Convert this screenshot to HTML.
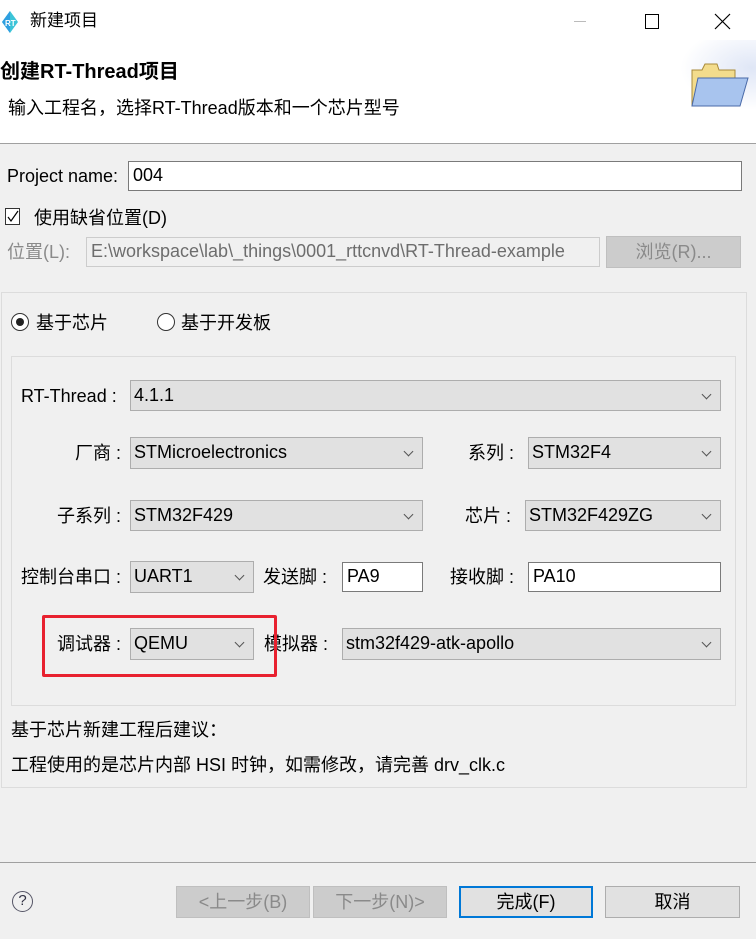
<!DOCTYPE html>
<html><head><meta charset="utf-8"><style>
*{margin:0;padding:0;box-sizing:border-box}
body{width:756px;height:939px;background:#f0f0f0;position:relative;overflow:hidden;font-family:"Liberation Sans","Noto Sans CJK SC",sans-serif;font-size:18px;color:#000}
.a{position:absolute;white-space:nowrap}
.cb{position:absolute;background:#e1e1e1;border:1px solid #adadad;padding-left:3px;line-height:29px}
.cb:after{content:"";position:absolute;right:10px;top:10px;width:6px;height:6px;border-right:1px solid #555;border-bottom:1px solid #555;transform:rotate(45deg)}
.in{position:absolute;background:#fff;border:1px solid #7a7a7a;padding-left:4px;line-height:27px}
.lb{position:absolute;white-space:nowrap;line-height:20px}
.btn{position:absolute;border:1px solid #adadad;background:#e1e1e1;text-align:center;line-height:30px;height:32px;width:134px}
</style></head><body>
<div class="a" style="left:0;top:0;width:756px;height:144px;background:#fff;border-bottom:1px solid #a0a0a0"></div>
<svg class="a" style="left:2px;top:11px" width="16" height="22" viewBox="0 0 16 22"><polygon points="0,11 8,0 16,11 8,22" fill="#3cc4d8"/><polygon points="0,11 8,0 8,22" fill="#2e9fe0"/><text x="3" y="15" font-size="8" fill="#fff" font-family="Liberation Sans" font-weight="bold">RT</text></svg>
<div class="a" style="left:30px;top:10px;font-size:17px;line-height:22px">新建项目</div>
<div class="a" style="left:574px;top:21px;width:12px;height:1px;background:#bbb"></div>
<div class="a" style="left:645px;top:14px;width:14px;height:15px;border:1px solid #000"></div>
<svg class="a" style="left:714px;top:13px" width="17" height="17"><path d="M1 1L16 16M16 1L1 16" stroke="#000" stroke-width="1.2"/></svg>
<div class="a" style="left:0;top:59px;font-size:20px;font-weight:bold;line-height:26px">创建RT-Thread项目</div>
<div class="a" style="left:8px;top:96px;font-size:18px;line-height:24px">输入工程名，选择RT-Thread版本和一个芯片型号</div>
<div class="a" style="left:680px;top:40px;width:90px;height:70px;background:radial-gradient(ellipse at 80% 40%,#dfe6f6,#fff 70%)"></div>
<svg class="a" style="left:690px;top:58px" width="60" height="52" viewBox="0 0 60 52"><path d="M2 12h10l3-6h12l2 6h16v36H2z" fill="#f3dc8c" stroke="#a88a3a"/><path d="M8 20h50l-8 28H2z" fill="#a8c4ee" stroke="#4a6aa8"/></svg>

<div class="lb" style="left:7px;top:166px">Project name:</div>
<div class="in" style="left:128px;top:161px;width:614px;height:30px">004</div>
<div class="a" style="left:5px;top:208px;width:15px;height:17px;border:1px solid #333;background:#fff"></div>
<svg class="a" style="left:7px;top:210px" width="12" height="13"><path d="M1 7l3 4 7-10" stroke="#000" fill="none" stroke-width="1.2"/></svg>
<div class="lb" style="left:34px;top:208px">使用缺省位置(D)</div>
<div class="lb" style="left:7px;top:242px;color:#8a8a8a">位置(L):</div>
<div class="in" style="left:86px;top:237px;width:514px;height:30px;background:#f0f0f0;border-color:#ccc;color:#6d6d6d;overflow:hidden">E:\workspace\lab\_things\0001_rttcnvd\RT-Thread-example</div>
<div class="btn" style="left:606px;top:236px;width:135px;height:32px;background:#ccc;border-color:#bfbfbf;color:#8a8a8a">浏览(R)...</div>

<div class="a" style="left:1px;top:292px;width:746px;height:496px;border:1px solid #dcdcdc"></div>
<div class="a" style="left:11px;top:313px;width:18px;height:18px;border:1px solid #333;border-radius:50%;background:#fff"></div>
<div class="a" style="left:16px;top:318px;width:8px;height:8px;border-radius:50%;background:#222"></div>
<div class="lb" style="left:36px;top:313px">基于芯片</div>
<div class="a" style="left:157px;top:313px;width:18px;height:18px;border:1px solid #333;border-radius:50%;background:#fff"></div>
<div class="lb" style="left:181px;top:313px">基于开发板</div>

<div class="a" style="left:11px;top:356px;width:725px;height:350px;border:1px solid #dcdcdc"></div>
<div class="lb" style="left:21px;top:386px">RT-Thread :</div>
<div class="cb" style="left:130px;top:380px;width:591px;height:31px">4.1.1</div>
<div class="lb" style="left:75px;top:443px">厂商 :</div>
<div class="cb" style="left:130px;top:437px;width:293px;height:32px">STMicroelectronics</div>
<div class="lb" style="left:468px;top:443px">系列 :</div>
<div class="cb" style="left:528px;top:437px;width:193px;height:32px">STM32F4</div>
<div class="lb" style="left:57px;top:506px">子系列 :</div>
<div class="cb" style="left:130px;top:500px;width:293px;height:31px">STM32F429</div>
<div class="lb" style="left:465px;top:506px">芯片 :</div>
<div class="cb" style="left:525px;top:500px;width:196px;height:31px">STM32F429ZG</div>
<div class="lb" style="left:21px;top:567px">控制台串口 :</div>
<div class="cb" style="left:130px;top:561px;width:124px;height:32px">UART1</div>
<div class="lb" style="left:263px;top:567px">发送脚 :</div>
<div class="in" style="left:342px;top:562px;width:81px;height:30px">PA9</div>
<div class="lb" style="left:450px;top:567px">接收脚 :</div>
<div class="in" style="left:528px;top:562px;width:193px;height:30px">PA10</div>
<div class="lb" style="left:57px;top:634px">调试器 :</div>
<div class="cb" style="left:130px;top:628px;width:124px;height:32px">QEMU</div>
<div class="lb" style="left:264px;top:634px">模拟器 :</div>
<div class="cb" style="left:342px;top:628px;width:379px;height:32px">stm32f429-atk-apollo</div>
<div class="a" style="left:42px;top:615px;width:235px;height:62px;border:3px solid #e8212f;border-radius:2px"></div>

<div class="lb" style="left:11px;top:720px">基于芯片新建工程后建议：</div>
<div class="lb" style="left:11px;top:755px">工程使用的是芯片内部 HSI 时钟，如需修改，请完善 drv_clk.c</div>

<div class="a" style="left:0;top:862px;width:756px;height:1px;background:#a0a0a0"></div>
<div class="a" style="left:12px;top:891px;width:21px;height:21px;border:1.5px solid #556;border-radius:50%;text-align:center;line-height:18px;font-size:15px;color:#334">?</div>
<div class="btn" style="left:176px;top:886px;background:#ccc;border-color:#bfbfbf;color:#8a8a8a">&lt;上一步(B)</div>
<div class="btn" style="left:313px;top:886px;background:#ccc;border-color:#bfbfbf;color:#8a8a8a">下一步(N)&gt;</div>
<div class="btn" style="left:459px;top:886px;border:2px solid #0078d7;line-height:28px">完成(F)</div>
<div class="btn" style="left:605px;top:886px;width:135px">取消</div>
</body></html>
